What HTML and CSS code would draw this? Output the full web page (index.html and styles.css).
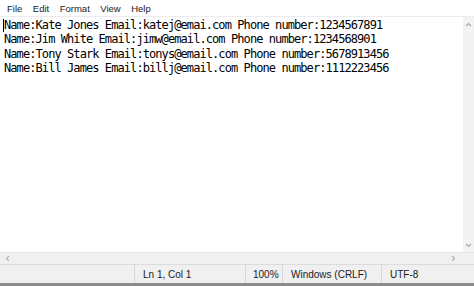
FILE: index.html
```html
<!DOCTYPE html>
<html lang="en">
<head>
    <meta charset="UTF-8">
    <title>Untitled - Notepad</title>
    <link rel="stylesheet" href="styles.css">
</head>
<body>
<div class="window">
    <div class="menu-bar">
        <span class="menu-item">File</span>
        <span class="menu-item">Edit</span>
        <span class="menu-item">Format</span>
        <span class="menu-item">View</span>
        <span class="menu-item">Help</span>
    </div>

    <div class="editor-row">
        <div class="editor">
            <div class="line"><span class="caret"></span>Name:Kate Jones Email:katej@emai.com Phone number:1234567891</div>
            <div class="line">Name:Jim White Email:jimw@email.com Phone number:1234568901</div>
            <div class="line">Name:Tony Stark Email:tonys@email.com Phone number:5678913456</div>
            <div class="line">Name:Bill James Email:billj@email.com Phone number:1112223456</div>
        </div>
        <div class="v-scroll">
            <svg class="arrow" width="7" height="5" viewBox="0 0 7 5"><path d="M1 4 L3.5 1.5 L6 4" fill="none" stroke="#a8a8a8" stroke-width="1.2"/></svg>
            <svg class="arrow" width="7" height="5" viewBox="0 0 7 5"><path d="M1 1 L3.5 3.5 L6 1" fill="none" stroke="#a8a8a8" stroke-width="1.2"/></svg>
        </div>
    </div>

    <div class="h-scroll">
        <svg class="arrow" width="5" height="7" viewBox="0 0 5 7"><path d="M4 1 L1.5 3.5 L4 6" fill="none" stroke="#b4b4b4" stroke-width="1.2"/></svg>
        <svg class="arrow right" width="5" height="7" viewBox="0 0 5 7"><path d="M1 1 L3.5 3.5 L1 6" fill="none" stroke="#b4b4b4" stroke-width="1.2"/></svg>
        <span class="corner"></span>
    </div>

    <div class="status-bar">
        <span class="status-cell first"></span>
        <span class="status-cell pos">Ln 1, Col 1</span>
        <span class="status-cell zoom">100%</span>
        <span class="status-cell eol">Windows (CRLF)</span>
        <span class="status-cell enc">UTF-8</span>
    </div>
    <div class="bottom-band"></div>
</div>
</body>
</html>
```

FILE: styles.css
```css
html, body {
    margin: 0;
    padding: 0;
    background: #ffffff;
}

.window {
    width: 474px;
    height: 286px;
    display: flex;
    flex-direction: column;
    overflow: hidden;
}

.menu-bar {
    height: 17px;
    display: flex;
    align-items: center;
    gap: 10.5px;
    padding-left: 7px;
    font-family: "Liberation Sans", Arial, sans-serif;
    font-size: 9.5px;
    color: #1a1a1a;
    border-bottom: 1px solid #ececec;
    box-sizing: border-box;
}

.editor-row {
    flex: 1;
    display: flex;
    flex-direction: row;
}

.editor {
    flex: 1;
    padding: 1px 0 0 4px;
    font-family: "DejaVu Sans Mono", "Liberation Mono", monospace;
    font-size: 12px;
    letter-spacing: -0.92px;
    line-height: 14.3px;
    color: #000000;
    overflow: hidden;
}

.line {
    position: relative;
    white-space: pre;
}

.caret {
    position: absolute;
    left: -1px;
    top: 1px;
    width: 1px;
    height: 13px;
    background: #000000;
}

.v-scroll {
    width: 11px;
    background: #f3f3f3;
    display: flex;
    flex-direction: column;
    justify-content: space-between;
    align-items: center;
    padding: 5px 0 4px;
    box-sizing: border-box;
}

.h-scroll {
    height: 11px;
    background: #f0f0f0;
    display: flex;
    align-items: center;
    padding-left: 5px;
    border-top: 1px solid #e6e6e6;
}

.h-scroll .right {
    margin-left: auto;
    margin-right: 7px;
}

.corner {
    width: 11px;
    height: 11px;
    background: #f0f0f0;
}

.status-bar {
    height: 19px;
    display: flex;
    align-items: center;
    background: #f0f0f0;
    border-top: 1px solid #dcdcdc;
    box-sizing: border-box;
    font-family: "Liberation Sans", Arial, sans-serif;
    font-size: 10px;
    color: #1a1a1a;
}

.status-cell {
    height: 100%;
    display: flex;
    align-items: center;
    box-sizing: border-box;
    border-right: 1px solid #d6d6d6;
}

.status-cell.first { width: 135px; }
.status-cell.pos { width: 111px; padding-left: 8px; }
.status-cell.zoom { width: 37px; padding-left: 7px; }
.status-cell.eol { width: 99px; padding-left: 8px; }
.status-cell.enc { padding-left: 8px; border-right: none; }

.bottom-band {
    height: 3px;
    background: #8c8c8c;
}
```
